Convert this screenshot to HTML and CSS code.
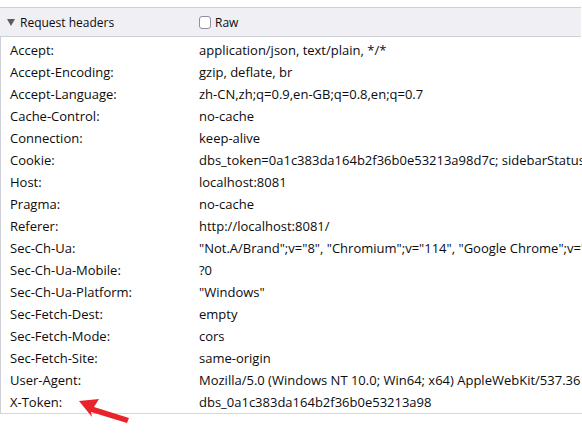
FILE: index.html
```html
<!DOCTYPE html>
<html>
<head>
<meta charset="utf-8">
<link rel="stylesheet" href="styles.css">
</head>
<body>
<div class="page">
  <div class="header">
    <div class="title"><span class="twisty"></span>Request headers</div>
    <div class="raw"><span class="box"></span>Raw</div>
  </div>
  <div class="rows">
    <div class="row"><div class="name">Accept:</div><div class="val">application/json, text/plain, */*</div></div>
    <div class="row"><div class="name">Accept-Encoding:</div><div class="val">gzip, deflate, br</div></div>
    <div class="row"><div class="name">Accept-Language:</div><div class="val">zh-CN,zh;q=0.9,en-GB;q=0.8,en;q=0.7</div></div>
    <div class="row"><div class="name">Cache-Control:</div><div class="val">no-cache</div></div>
    <div class="row"><div class="name">Connection:</div><div class="val">keep-alive</div></div>
    <div class="row"><div class="name">Cookie:</div><div class="val">dbs_token=0a1c383da164b2f36b0e53213a98d7c; sidebarStatus=0</div></div>
    <div class="row"><div class="name">Host:</div><div class="val">localhost:8081</div></div>
    <div class="row"><div class="name">Pragma:</div><div class="val">no-cache</div></div>
    <div class="row"><div class="name">Referer:</div><div class="val">http://localhost:8081/</div></div>
    <div class="row"><div class="name">Sec-Ch-Ua:</div><div class="val">"Not.A/Brand";v="8", "Chromium";v="114", "Google Chrome";v="114"</div></div>
    <div class="row"><div class="name">Sec-Ch-Ua-Mobile:</div><div class="val">?0</div></div>
    <div class="row"><div class="name">Sec-Ch-Ua-Platform:</div><div class="val">"Windows"</div></div>
    <div class="row"><div class="name">Sec-Fetch-Dest:</div><div class="val">empty</div></div>
    <div class="row"><div class="name">Sec-Fetch-Mode:</div><div class="val">cors</div></div>
    <div class="row"><div class="name">Sec-Fetch-Site:</div><div class="val">same-origin</div></div>
    <div class="row"><div class="name">User-Agent:</div><div class="val">Mozilla/5.0 (Windows NT 10.0; Win64; x64) AppleWebKit/537.36 (KHTML, like Gecko)</div></div>
    <div class="row"><div class="name">X-Token:</div><div class="val">dbs_0a1c383da164b2f36b0e53213a98</div></div>
  </div>
  <svg class="arrow" width="60" height="30" viewBox="0 0 60 30">
    <polygon points="0,2 20,0 15,8 50,19 48,24 12,13 13,18" fill="#e8232a"/>
  </svg>
</div>
</body>
</html>
```

FILE: styles.css
```css
html, body {
  margin: 0;
  padding: 0;
  background: #fff;
}
.page {
  position: relative;
  width: 582px;
  height: 437px;
  padding-top: 7px;
  box-sizing: border-box;
  font-family: "Open Sans", "Noto Sans", sans-serif;
  font-size: 12px;
  color: #0c0c0d;
}
.header {
  display: flex;
  align-items: center;
  height: 28px;
  margin-right: 1px;
  background: #f0f0f4;
  border-top: 1px solid #cfcfd8;
  border-bottom: 1px solid #cfcfd8;
}
.title {
  width: 199px;
  display: flex;
  align-items: center;
  padding-left: 7px;
  box-sizing: border-box;
}
.twisty {
  width: 0;
  height: 0;
  border-left: 4px solid transparent;
  border-right: 4px solid transparent;
  border-top: 7px solid #5b5b66;
  margin-right: 5px;
}
.raw {
  display: flex;
  align-items: center;
}
.box {
  width: 10px;
  height: 11px;
  border: 1px solid #8f8f9d;
  border-radius: 3px;
  margin-right: 4px;
  background: #fff;
}
.rows {
  border-left: 1px solid #cfcfd8;
  border-bottom: 1px solid #d7d7db;
  padding-top: 2px;
  font-size: 13px;
}
.row {
  display: flex;
  height: 22px;
  align-items: center;
}
.name {
  width: 189px;
  padding-left: 9px;
  flex: none;
  white-space: nowrap;
}
.val {
  white-space: nowrap;
  overflow: hidden;
  flex: 1;
}
.arrow {
  position: absolute;
  left: 79px;
  top: 399px;
}
```
